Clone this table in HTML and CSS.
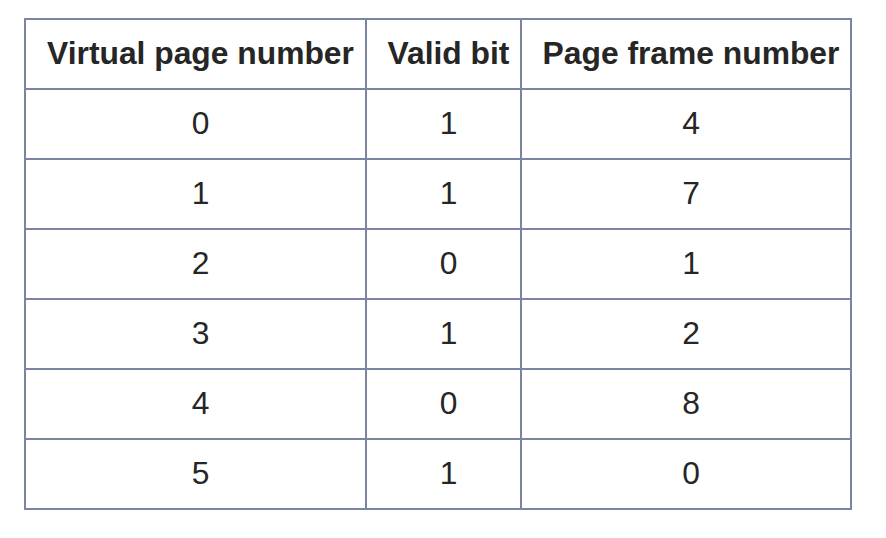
FILE: index.html
```html
<!DOCTYPE html>
<html>
<head>
<meta charset="utf-8">
<link rel="stylesheet" href="styles.css">
</head>
<body>
<table class="pt">
  <colgroup>
    <col class="c1">
    <col class="c2">
    <col class="c3">
  </colgroup>
  <thead>
    <tr><th>Virtual page number</th><th>Valid bit</th><th>Page frame number</th></tr>
  </thead>
  <tbody>
    <tr><td>0</td><td>1</td><td>4</td></tr>
    <tr><td>1</td><td>1</td><td>7</td></tr>
    <tr><td>2</td><td>0</td><td>1</td></tr>
    <tr><td>3</td><td>1</td><td>2</td></tr>
    <tr><td>4</td><td>0</td><td>8</td></tr>
    <tr><td>5</td><td>1</td><td>0</td></tr>
  </tbody>
</table>
</body>
</html>
```

FILE: styles.css
```css
html, body {
  margin: 0;
  padding: 0;
  background: #ffffff;
}
body {
  padding: 18px 0 0 24px;
  font-family: "Liberation Sans", Arial, sans-serif;
  color: #262626;
}
.pt {
  border-collapse: collapse;
  table-layout: fixed;
  font-size: 31.8px;
}
.c1 { width: 341px; }
.c2 { width: 155px; }
.c3 { width: 330px; }
.pt th, .pt td {
  border: 2px solid #7b85a2;
  height: 70px;
  padding: 0 4px 0 14px;
  box-sizing: border-box;
  text-align: center;
  vertical-align: middle;
  line-height: 1;
}
.pt th {
  font-weight: bold;
  white-space: nowrap;
}
.pt td {
  font-weight: normal;
}
```
